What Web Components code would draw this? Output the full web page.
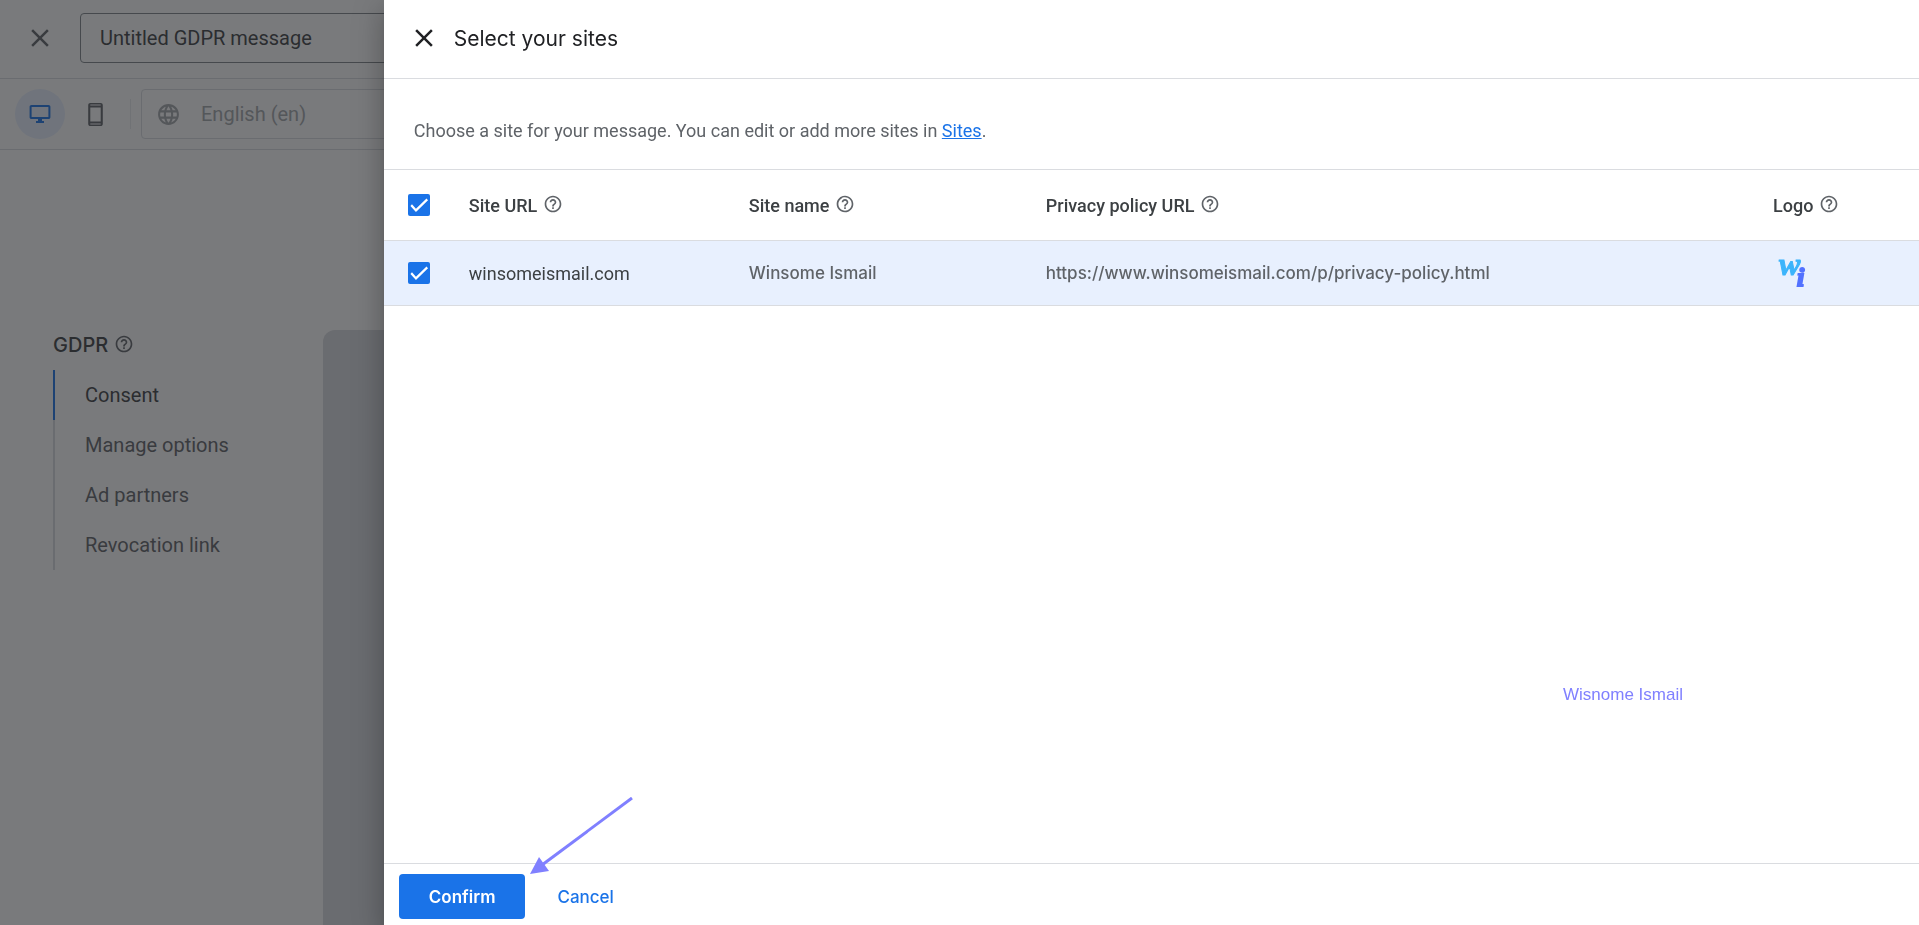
<!DOCTYPE html>
<html lang="en">
<head>
  <meta charset="utf-8">
  <title>Select your sites</title>
  <style>
    body {
      margin: 0;
      font-family: Roboto, sans-serif;
      color: #3c4043;
      overflow: hidden;
    }

    a { color: #1a73e8; }
  </style>
</head>
<body>
  <message-editor></message-editor>
  <side-drawer heading="Select your sites">
    <span slot="intro">Choose a site for your message. You can edit or add more sites in <a href="#sites">Sites</a>.</span>
    <site-table></site-table>
    <action-button slot="actions" variant="primary">Confirm</action-button>
    <action-button slot="actions">Cancel</action-button>
    <pointer-arrow slot="notes"></pointer-arrow>
    <author-mark slot="notes">Wisnome Ismail</author-mark>
  </side-drawer>

  <script>
    const ICONS = {
      close: '<path d="M19 6.41 17.59 5 12 10.59 6.41 5 5 6.41 10.59 12 5 17.59 6.41 19 12 13.41 17.59 19 19 17.59 13.41 12z"/>',
      desktop: '<path d="M20.5 3h-17C2.4 3 1.6 3.8 1.6 4.8v10.4c0 1 .8 1.8 1.9 1.8H10v2H8v2h8v-2h-2v-2h6.500c1.100 0 1.900-.8 1.900-1.800V4.800c0-1-.8-1.800-1.900-1.800zm-.1 12H3.600V5h16.800v10z"/>',
      phone: '<path d="M17 1H7c-1.100 0-2 .9-2 2v18c0 1.100.9 2 2 2h10c1.100 0 2-.9 2-2V3c0-1.100-.9-2-2-2zm0 20.500H7v-.8h10v.8zm0-2.700H7V5.200h10v13.600zm0-15.500H7v-.8h10v.8z"/>',
      globe: '<path d="M11.99 2C6.47 2 2 6.48 2 12s4.47 10 9.99 10C17.52 22 22 17.52 22 12S17.52 2 11.99 2zm6.93 6h-2.95c-.32-1.25-.78-2.45-1.38-3.56 1.84.63 3.37 1.91 4.33 3.56zM12 4.04c.83 1.2 1.48 2.53 1.91 3.96h-3.82c.43-1.43 1.08-2.76 1.91-3.96zM4.26 14C4.1 13.36 4 12.69 4 12s.1-1.36.26-2h3.38c-.08.66-.14 1.32-.14 2s.06 1.34.14 2H4.26zm.82 2h2.95c.32 1.25.78 2.45 1.38 3.56-1.84-.63-3.37-1.9-4.33-3.56zm2.95-8H5.08c.96-1.66 2.49-2.93 4.33-3.56C8.81 5.55 8.35 6.75 8.03 8zM12 19.96c-.83-1.2-1.48-2.53-1.91-3.96h3.82c-.43 1.43-1.08 2.76-1.91 3.96zM14.34 14H9.66c-.09-.66-.16-1.32-.16-2s.07-1.35.16-2h4.68c.09.65.16 1.32.16 2s-.07 1.34-.16 2zm.25 5.56c.6-1.11 1.06-2.31 1.38-3.56h2.95c-.96 1.65-2.49 2.93-4.33 3.56zM16.36 14c.08-.66.14-1.32.14-2s-.06-1.34-.14-2h3.38c.16.64.26 1.31.26 2s-.1 1.36-.26 2h-3.38z"/>',
      help: '<path d="M11 18h2v-2h-2v2zm1-16C6.48 2 2 6.48 2 12s4.48 10 10 10 10-4.48 10-10S17.52 2 12 2zm0 18c-4.41 0-8-3.59-8-8s3.59-8 8-8 8 3.59 8 8-3.59 8-8 8zm0-14c-2.21 0-4 1.79-4 4h2c0-1.1.9-2 2-2s2 .9 2 2c0 2-3 1.75-3 5h2c0-2.25 3-2.5 3-5 0-2.21-1.79-4-4-4z"/>'
    };

    class BaseElement extends HTMLElement {
      constructor() {
        super();
        this.attachShadow({ mode: 'open' });
      }

      connectedCallback() {
        this.shadowRoot.innerHTML = this.render();
      }
    }

    class UiIcon extends BaseElement {
      render() {
        const size = this.getAttribute('size') || '24';
        return `
          <style>
            :host { display: inline-flex; flex: none; }
            svg { display: block; fill: currentColor; }
          </style>
          <svg width="${size}" height="${size}" viewBox="0 0 24 24" aria-hidden="true">${ICONS[this.getAttribute('name')]}</svg>
        `;
      }
    }

    class IconButton extends BaseElement {
      render() {
        const active = this.hasAttribute('active');
        return `
          <style>
            :host { display: block; flex: none; color: #5f6368; }
            button {
              display: flex;
              align-items: center;
              justify-content: center;
              width: 50px;
              height: 50px;
              padding: 0;
              border: none;
              border-radius: 50%;
              background: none;
              color: inherit;
              cursor: pointer;
            }
            button.active { background: #e8f0fe; color: #1a73e8; }
          </style>
          <button type="button" class="${active ? 'active' : ''}" aria-label="${this.getAttribute('label')}">
            <ui-icon name="${this.getAttribute('icon')}" size="${this.getAttribute('size') || '24'}"></ui-icon>
          </button>
        `;
      }
    }

    /* Text followed by a round help icon */
    class HelpLabel extends BaseElement {
      render() {
        return `
          <style>
            :host { display: flex; align-items: center; gap: 6px; }
            button {
              display: flex;
              padding: 0 0 2px;
              border: none;
              background: none;
              color: #5f6368;
              cursor: pointer;
            }
          </style>
          <slot></slot>
          <button type="button" aria-label="Help"><ui-icon name="help" size="20"></ui-icon></button>
        `;
      }
    }

    class SideNav extends BaseElement {
      render() {
        const items = ['Consent', 'Manage options', 'Ad partners', 'Revocation link'];
        return `
          <style>
            :host { display: block; }
            help-label {
              height: 30px;
              margin-bottom: 10px;
              font: 500 20px/30px Inter, sans-serif;
              color: #3c4043;
            }
            ul { list-style: none; margin: 0; padding: 0; }
            a {
              display: block;
              padding-left: 30px;
              border-left: 2px solid #dadce0;
              font-size: 20px;
              line-height: 50px;
              color: #5f6368;
              text-decoration: none;
            }
            a.active { border-color: #1a73e8; color: #3c4043; }
          </style>
          <help-label>GDPR</help-label>
          <nav>
            <ul>
              ${items.map((item, i) => `<li><a href="#step-${i}" class="${i === 0 ? 'active' : ''}">${item}</a></li>`).join('')}
            </ul>
          </nav>
        `;
      }
    }

    class MessageEditor extends BaseElement {
      render() {
        return `
          <style>
            :host {
              display: flex;
              flex-direction: column;
              position: relative;
              height: 100vh;
              background: #fff;
            }
            /* Scrim over the page while the drawer is open */
            :host::after {
              content: '';
              position: absolute;
              inset: 0;
              background: rgba(32, 33, 36, 0.6);
            }
            header, .toolbar {
              display: flex;
              align-items: center;
              box-sizing: border-box;
              padding: 0 15px;
              border-bottom: 1px solid #dadce0;
            }
            header { height: 79px; padding-bottom: 2px; gap: 15px; }
            .toolbar { height: 71px; gap: 5px; }
            input {
              flex: 1;
              box-sizing: border-box;
              height: 50px;
              padding: 0 19px;
              border: 1px solid #80868b;
              border-radius: 4px;
              background: none;
              font: 20px Roboto, sans-serif;
              color: #3c4043;
            }
            .divider { width: 1px; height: 30px; margin: 0 5px; background: #e8eaed; }
            .language {
              flex: 1;
              display: flex;
              align-items: center;
              gap: 20px;
              box-sizing: border-box;
              height: 50px;
              padding: 0 14px;
              border: 1px solid #dadce0;
              border-radius: 4px;
              color: #a4a7ab;
            }
            select {
              flex: 1;
              appearance: none;
              border: none;
              padding: 0;
              background: none;
              font: 20px Roboto, sans-serif;
              color: inherit;
              opacity: 1;
            }
            main {
              flex: 1;
              display: grid;
              grid-template-columns: 270px 1fr;
              padding: 180px 53px 0;
            }
            .preview { border-radius: 12px 12px 0 0; background: #dadce0; }
          </style>
          <header>
            <icon-button icon="close" size="30" label="Close editor"></icon-button>
            <input type="text" aria-label="Message name" value="Untitled GDPR message">
          </header>
          <div class="toolbar">
            <icon-button icon="desktop" label="Desktop" active></icon-button>
            <icon-button icon="phone" label="Mobile" size="25"></icon-button>
            <div class="divider"></div>
            <label class="language">
              <ui-icon name="globe" size="25"></ui-icon>
              <select aria-label="Language" disabled><option>English (en)</option></select>
            </label>
          </div>
          <main>
            <side-nav></side-nav>
            <div class="preview"></div>
          </main>
        `;
      }
    }

    class CheckBox extends BaseElement {
      render() {
        return `
          <style>
            :host { display: block; }
            input {
              appearance: none;
              display: block;
              width: 22px;
              height: 22px;
              margin: 0;
              border: 2px solid #5f6368;
              border-radius: 2px;
              cursor: pointer;
            }
            input:checked { border: none; background: #1a73e8; }
            input:checked::before {
              content: '';
              display: block;
              height: 22px;
              background: #fff;
              clip-path: polygon(12% 54%, 19% 47%, 37% 67%, 85% 21%, 92% 28%, 37% 82%);
            }
          </style>
          <input type="checkbox" aria-label="${this.getAttribute('label')}" checked>
        `;
      }
    }

    class SiteLogo extends BaseElement {
      render() {
        return `
          <style>
            :host { display: block; }
            svg { display: block; font: italic 700 32px "Liberation Serif", serif; }
            .second { font-size: 26px; }
          </style>
          <svg width="44" height="54" viewBox="0 0 44 54" role="img" aria-label="Site logo">
            <text x="6" y="29" fill="#3cb4fb" stroke="#3cb4fb">w</text>
            <text class="second" x="24" y="40" fill="#5271ff" stroke="#5271ff" stroke-width="2">i</text>
          </svg>
        `;
      }
    }

    class SiteTable extends BaseElement {
      render() {
        return `
          <style>
            :host { display: block; }
            table {
              width: 100%;
              table-layout: fixed;
              border-collapse: separate;
              border-spacing: 0;
              font-size: 18px;
            }
            th, td {
              padding: 0;
              border-bottom: 1px solid #dadce0;
              text-align: left;
            }
            th { height: 70px; font-weight: 500; color: #3c4043; }
            td { height: 64px; background: #e8f0fe; }
            th:first-child, td:first-child { padding-left: 24px; }
            .check { width: 61px; }
            .url { width: 280px; }
            .name { width: 297px; }
            .logo { width: 146px; }
            .detail { font: 500 17px Inter, sans-serif; color: #5f6368; }
          </style>
          <table>
            <thead>
              <tr>
                <th class="check"><check-box label="Select all sites"></check-box></th>
                <th class="url"><help-label>Site URL</help-label></th>
                <th class="name"><help-label>Site name</help-label></th>
                <th><help-label>Privacy policy URL</help-label></th>
                <th class="logo"><help-label>Logo</help-label></th>
              </tr>
            </thead>
            <tbody>
              <tr>
                <td><check-box label="Select winsomeismail.com"></check-box></td>
                <td>winsomeismail.com</td>
                <td class="detail">Winsome Ismail</td>
                <td class="detail">https://www.winsomeismail.com/p/privacy-policy.html</td>
                <td><site-logo></site-logo></td>
              </tr>
            </tbody>
          </table>
        `;
      }
    }

    class ActionButton extends BaseElement {
      render() {
        const variant = this.getAttribute('variant') || 'text';
        return `
          <style>
            :host { display: block; }
            button {
              height: 45px;
              padding: 0 16px;
              border: none;
              border-radius: 4px;
              background: none;
              font: 500 17px Inter, sans-serif;
              color: #1a73e8;
              cursor: pointer;
            }
            .primary { padding: 0 30px; background: #1a73e8; font-weight: 600; color: #fff; }
          </style>
          <button type="button" class="${variant}"><slot></slot></button>
        `;
      }
    }

    class PointerArrow extends BaseElement {
      render() {
        return `
          <style>
            :host { position: absolute; left: 146px; bottom: 50px; }
            svg { display: block; }
          </style>
          <svg width="104" height="78" viewBox="0 0 104 78" aria-hidden="true">
            <path d="M102 1 12 68" stroke="#8080ff" stroke-width="3"/>
            <path d="M0 77 9 60 19 74z" fill="#8080ff"/>
          </svg>
        `;
      }
    }

    class AuthorMark extends BaseElement {
      render() {
        return `
          <style>
            :host {
              position: absolute;
              right: 236px;
              bottom: 220px;
              font: 17px/20px "Liberation Sans", sans-serif;
              color: #8080ff;
            }
          </style>
          <slot></slot>
        `;
      }
    }

    class SideDrawer extends BaseElement {
      render() {
        return `
          <style>
            :host {
              display: flex;
              flex-direction: column;
              position: fixed;
              inset: 0 0 0 20%;
              background: #fff;
              box-shadow: 0 8px 10px -5px rgba(0, 0, 0, 0.2), 0 16px 24px 2px rgba(0, 0, 0, 0.14), 0 6px 30px 5px rgba(0, 0, 0, 0.12);
            }
            header {
              display: flex;
              align-items: center;
              gap: 5px;
              box-sizing: border-box;
              height: 79px;
              padding: 0 15px 2px;
              border-bottom: 1px solid #dadce0;
            }
            icon-button { color: #202124; }
            h1 { margin: 0; font: 400 21px Inter, sans-serif; color: #202124; }
            .intro {
              padding: 40px 30px 26px;
              border-bottom: 1px solid #dadce0;
              font-size: 18px;
              line-height: 24px;
              color: #5f6368;
            }
            ::slotted(span) { display: block; }
            .content { flex: 1; }
            footer {
              display: flex;
              gap: 16px;
              padding: 10px 15px 6px;
              border-top: 1px solid #dadce0;
            }
          </style>
          <header>
            <icon-button icon="close" size="30" label="Close"></icon-button>
            <h1>${this.getAttribute('heading')}</h1>
          </header>
          <div class="intro"><slot name="intro"></slot></div>
          <div class="content"><slot></slot></div>
          <footer><slot name="actions"></slot></footer>
          <slot name="notes"></slot>
        `;
      }
    }

    customElements.define('ui-icon', UiIcon);
    customElements.define('icon-button', IconButton);
    customElements.define('help-label', HelpLabel);
    customElements.define('side-nav', SideNav);
    customElements.define('message-editor', MessageEditor);
    customElements.define('check-box', CheckBox);
    customElements.define('site-logo', SiteLogo);
    customElements.define('site-table', SiteTable);
    customElements.define('action-button', ActionButton);
    customElements.define('pointer-arrow', PointerArrow);
    customElements.define('author-mark', AuthorMark);
    customElements.define('side-drawer', SideDrawer);
  </script>
</body>
</html>
